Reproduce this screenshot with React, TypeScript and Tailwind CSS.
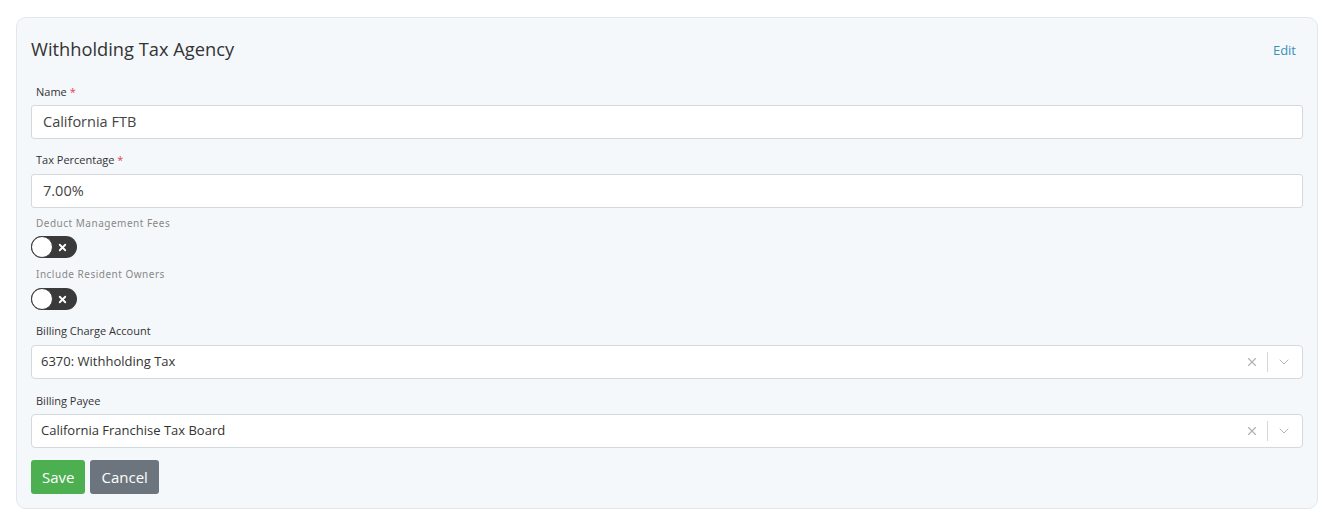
import { ChevronDown, X } from "lucide-react"

function Toggle() {
  return (
    <div className="flex h-[22px] w-[46px] items-center rounded-full bg-[#3a3a3a]">
      <div className="h-[22px] w-[22px] rounded-full border border-[#3a3a3a] bg-white" />
      <X className="ml-[4px] h-[11px] w-[11px] text-white" strokeWidth={4} />
    </div>
  )
}

function SelectBox({ value }: { value: string }) {
  return (
    <div className="flex h-[34px] items-center rounded-[4px] border border-[#d6d9dc] bg-white pl-[9px]">
      <span className="flex-1 text-[13px] text-[#333]">{value}</span>
      <X className="h-[14px] w-[14px] text-[#b3b3b3]" strokeWidth={2} />
      <div className="mx-[8px] h-[20px] w-px bg-[#d6d6d6]" />
      <ChevronDown className="mr-[10px] h-[16px] w-[16px] text-[#b3b3b3]" strokeWidth={1.5} />
    </div>
  )
}

export default function App() {
  return (
    <div className="min-h-screen bg-white pl-4 pr-5 pt-[17px] font-['Open_Sans',sans-serif]">
      <div className="flex flex-col rounded-[10px] border border-[#e3e7eb] bg-[#f5f8fb] px-[14px] pb-[14px] pt-[17px]">
        <div className="flex h-[27px] items-center justify-between">
          <h2 className="text-[18.3px] text-[#333]">Withholding Tax Agency</h2>
          <a className="mr-[7px] mt-[5px] text-[13px] text-[#3a8fb7]">Edit</a>
        </div>

        <label className="mt-[22px] pl-[5px] text-[11px] leading-[16px] text-[#333]">
          Name <span className="text-[#e0454f]">*</span>
        </label>
        <div className="mt-[5px] flex h-[34px] items-center rounded-[3px] border border-[#d6d9dc] bg-white px-[11px] text-[14.5px] text-[#444]">
          California FTB
        </div>

        <label className="mt-[13px] pl-[5px] text-[11px] leading-[16px] text-[#333]">
          Tax Percentage <span className="text-[#e0454f]">*</span>
        </label>
        <div className="mt-[6px] flex h-[34px] items-center rounded-[3px] border border-[#d6d9dc] bg-white px-[11px] text-[14.5px] text-[#444]">
          7.00%
        </div>

        <label className="mt-[8px] pl-[5px] font-['Noto_Sans',sans-serif] text-[10px] leading-[14px] tracking-[0.5px] text-[#888]">
          Deduct Management Fees
        </label>
        <div className="mt-[6px]">
          <Toggle />
        </div>

        <label className="mt-[9px] pl-[5px] font-['Noto_Sans',sans-serif] text-[10px] leading-[14px] tracking-[0.5px] text-[#888]">
          Include Resident Owners
        </label>
        <div className="mt-[7px]">
          <Toggle />
        </div>

        <label className="mt-[13px] pl-[5px] text-[11px] leading-[16px] text-[#333]">
          Billing Charge Account
        </label>
        <div className="mt-[6px]">
          <SelectBox value="6370: Withholding Tax" />
        </div>

        <label className="mt-[14px] pl-[5px] text-[11px] leading-[16px] text-[#333]">
          Billing Payee
        </label>
        <div className="mt-[5px]">
          <SelectBox value="California Franchise Tax Board" />
        </div>

        <div className="mt-[12px] flex gap-[5px]">
          <button className="h-[34px] rounded-[3px] bg-[#4caf50] px-[11px] text-[15px] text-white">
            Save
          </button>
          <button className="h-[34px] rounded-[3px] bg-[#6c757d] px-[11px] text-[15px] text-white">
            Cancel
          </button>
        </div>
      </div>
    </div>
  )
}
